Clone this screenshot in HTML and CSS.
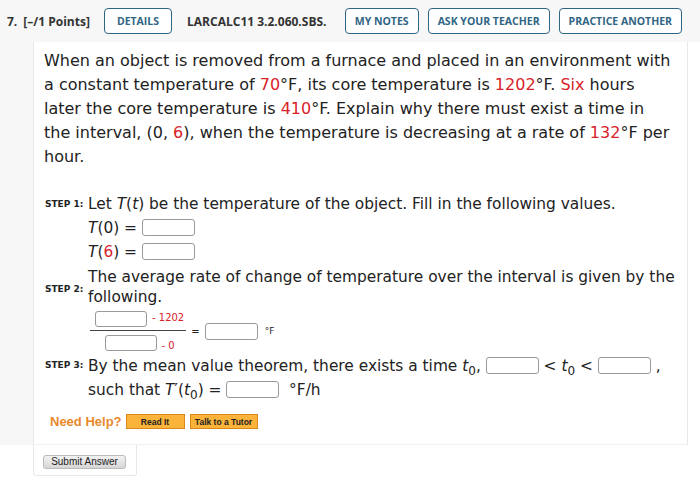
FILE: index.html
```html
<!DOCTYPE html>
<html lang="en">

<head>
    <meta charset="UTF-8">
    <title>Question 7</title>
    <link rel="stylesheet" href="styles.css">
</head>

<body>

    <div class="header">
        <span class="qnum">7.</span>
        <span class="points">[&ndash;/1 Points]</span>
        <button class="hbtn">DETAILS</button>
        <span class="code">LARCALC11 3.2.060.SBS.</span>
        <div class="spacer"></div>
        <button class="hbtn">MY NOTES</button>
        <button class="hbtn">ASK YOUR TEACHER</button>
        <button class="hbtn">PRACTICE ANOTHER</button>
    </div>

    <div class="panel">
        <p class="intro">
            When an object is removed from a furnace and placed in an environment with
            a constant temperature of <span class="red">70</span>&deg;F, its core temperature is
            <span class="red">1202</span>&deg;F. <span class="red">Six</span> hours
            later the core temperature is <span class="red">410</span>&deg;F. Explain why there must exist a time in
            the interval, (0, <span class="red">6</span>), when the temperature is decreasing at a rate of
            <span class="red">132</span>&deg;F per hour.
        </p>

        <div class="step step1">
            <span class="label">STEP 1:</span>
            <div class="body">
                <div class="line">Let <i>T</i>(<i>t</i>) be the temperature of the object. Fill in the following values.</div>
                <div class="line"><i>T</i>(0) = <span class="box"></span></div>
                <div class="line"><i>T</i>(<span class="red">6</span>) = <span class="box"></span></div>
            </div>
        </div>

        <div class="step step2">
            <span class="label">STEP 2:</span>
            <div class="body">
                <div class="line tight">The average rate of change of temperature over the interval is given by the following.</div>
            </div>
        </div>

        <div class="fraction-row">
            <div class="fraction">
                <div class="num"><span class="box"></span><span class="small red">- 1202</span></div>
                <div class="den"><span class="box"></span><span class="small red">- 0</span></div>
            </div>
            <span class="eq">=</span>
            <span class="box"></span>
            <span class="unit">&deg;F</span>
        </div>

        <div class="step step3">
            <span class="label">STEP 3:</span>
            <div class="body">
                <div class="line">By the mean value theorem, there exists a time <i>t</i><sub>0</sub>, <span class="box"></span> &lt; <i>t</i><sub>0</sub> &lt; <span class="box"></span> ,</div>
                <div class="line">such that <i>T</i>&prime;(<i>t</i><sub>0</sub>) = <span class="box"></span> &nbsp;&deg;F/h</div>
            </div>
        </div>

        <div class="help">
            <span class="need">Need Help?</span>
            <button class="obtn read">Read It</button>
            <button class="obtn tutor">Talk to a Tutor</button>
        </div>
    </div>

    <div class="submit-area">
        <button class="submit">Submit Answer</button>
    </div>

</body>

</html>
```

FILE: styles.css
```css
* {
    box-sizing: border-box;
}

body {
    margin: 0;
    background: #fff;
    color: #222;
    font-family: "DejaVu Sans", Verdana, sans-serif;
}

.header {
    display: flex;
    align-items: center;
    height: 42px;
    padding: 0 18px 0 7px;
    background: #f7f7f7;
    font-family: "Open Sans", sans-serif;
    font-weight: bold;
    font-size: 12px;
    color: #333;
}

.qnum {
    margin-right: 6px;
}

.points {
    margin-right: 14px;
}

.code {
    margin-left: 15px;
}

.spacer {
    flex: 1;
}

.hbtn {
    height: 26px;
    padding: 0 9px;
    margin-left: 9px;
    background: #fff;
    border: 1px solid #2f6585;
    border-radius: 4px;
    color: #2f6585;
    font-family: "Open Sans", sans-serif;
    font-weight: bold;
    font-size: 10.5px;
}

.header .hbtn:first-of-type {
    margin-left: 0;
    padding: 0 12px;
}

.panel {
    margin: 0 12px 0 33px;
    padding: 7px 10px 1px 10px;
    background: #fff;
    border-left: 1px solid #e8e8e8;
    border-right: 1px solid #e8e8e8;
    border-bottom: 1px solid #f0f0f0;
    box-shadow: -33px 0 0 #f7f7f7;
}

.intro {
    margin: 0 4px 23px 0;
    font-size: 16px;
    line-height: 24px;
}

.red {
    color: #d8232a;
}

.step {
    display: flex;
    align-items: flex-start;
}

.label {
    width: 43px;
    flex-shrink: 0;
    font-size: 9px;
    font-weight: bold;
    padding-top: 7px;
    margin-left: 1px;
    white-space: nowrap;
}

.line {
    font-size: 15.4px;
    line-height: 24px;
}

.step2 {
    align-items: center;
    margin-top: 3px;
}

.step2 .label {
    padding-top: 4px;
}

.line.tight {
    line-height: 20px;
}

.box {
    display: inline-block;
    width: 53px;
    height: 17px;
    border: 1px solid #999;
    border-radius: 3px;
    vertical-align: -3px;
    background: #fff;
}

sub {
    font-size: 12px;
    line-height: 0;
}

.fraction-row {
    display: flex;
    align-items: center;
    padding-left: 46px;
    margin-top: 4px;
    margin-bottom: 3px;
}

.fraction {
    display: flex;
    flex-direction: column;
    align-items: center;
}

.num {
    padding: 0 2px 3px 5px;
    border-bottom: 1px solid #444;
    display: flex;
    align-items: center;
}

.den {
    padding: 3px 0 0 13px;
    display: flex;
    align-items: center;
}

.num .box,
.den .box {
    width: 52px;
    height: 16px;
}

.small {
    font-size: 10px;
    margin-left: 5px;
}

.num .small {
    margin-top: -4px;
}

.den .small {
    margin-top: 6px;
    margin-right: 10px;
}

.eq {
    font-size: 10px;
    margin: 0 5px;
}

.unit {
    font-size: 9px;
    margin-left: 7px;
}

.step3 .label {
    padding-top: 6px;
}

.help {
    display: flex;
    align-items: center;
    margin-top: 12px;
    padding-left: 6px;
    padding-bottom: 14px;
    font-family: "Liberation Sans", Arial, sans-serif;
}

.need {
    color: #e8892b;
    font-weight: bold;
    font-size: 13px;
    margin-right: 4px;
}

.obtn {
    height: 15px;
    padding: 0 6px;
    margin-right: 5px;
    background: #fbb33a;
    border: 1px solid #d9891c;
    color: #222;
    font-family: "Liberation Sans", Arial, sans-serif;
    font-weight: bold;
    font-size: 8.5px;
    line-height: 12px;
}

.read {
    width: 59px;
}

.tutor {
    width: 68px;
    padding: 0;
}

.submit-area {
    margin-left: 33px;
    width: 104px;
    padding: 5px 0 6px 9px;
    border: 1px solid #e8e8e8;
    border-top: none;
    border-radius: 0 0 3px 3px;
}

.submit {
    height: 14px;
    width: 83px;
    padding: 0;
    background: linear-gradient(#f2f2f2, #d6d6d6);
    border: 1px solid #bbb;
    border-radius: 3px;
    font-family: "Liberation Sans", Arial, sans-serif;
    font-size: 10px;
    color: #222;
    line-height: 12px;
}
```
